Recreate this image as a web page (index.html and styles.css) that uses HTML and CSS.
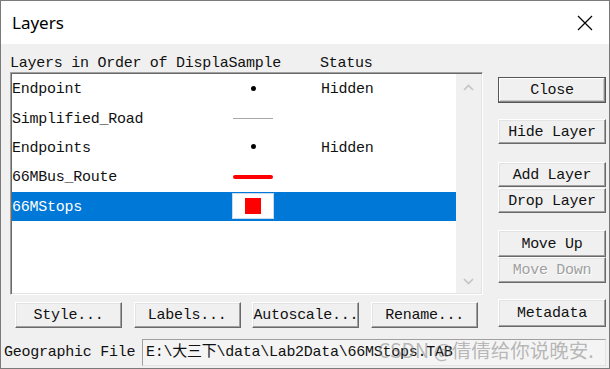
FILE: index.html
```html
<!DOCTYPE html>
<html lang="en">
<head>
    <meta charset="UTF-8">
    <title>Layers</title>
    <link rel="stylesheet" href="styles.css">
</head>
<body>
    <div class="window">
        <!-- Title bar -->
        <div class="titlebar">
            <span class="title">Layers</span>
            <svg class="close-x" width="16" height="16" viewBox="0 0 16 16">
                <path d="M1 1 L15 15 M15 1 L1 15" stroke="#000" stroke-width="1.2" fill="none"/>
            </svg>
        </div>

        <div class="main">
            <!-- Layer list -->
            <div class="left">
                <div class="list-header">
                    <span class="h-name">Layers in Order of Displa</span><span class="h-sample">Sample</span><span>Status</span>
                </div>
                <div class="listbox">
                    <div class="rows">
                        <div class="row">
                            <span class="name">Endpoint</span>
                            <span class="sample"><i class="dot"></i></span>
                            <span class="status">Hidden</span>
                        </div>
                        <div class="row">
                            <span class="name">Simplified_Road</span>
                            <span class="sample"><i class="line-gray"></i></span>
                            <span class="status"></span>
                        </div>
                        <div class="row">
                            <span class="name">Endpoints</span>
                            <span class="sample"><i class="dot"></i></span>
                            <span class="status">Hidden</span>
                        </div>
                        <div class="row">
                            <span class="name">66MBus_Route</span>
                            <span class="sample"><i class="line-red"></i></span>
                            <span class="status"></span>
                        </div>
                        <div class="row selected">
                            <span class="name">66MStops</span>
                            <span class="sample"><span class="swatch"><i class="square"></i></span></span>
                            <span class="status"></span>
                        </div>
                    </div>
                    <div class="scrollbar">
                        <svg width="11" height="7" viewBox="0 0 11 7"><path d="M1 6 L5.5 1.5 L10 6" stroke="#c4c4c4" stroke-width="1.6" fill="none"/></svg>
                        <svg width="11" height="7" viewBox="0 0 11 7"><path d="M1 1 L5.5 5.5 L10 1" stroke="#c4c4c4" stroke-width="1.6" fill="none"/></svg>
                    </div>
                </div>
            </div>

            <!-- Side buttons -->
            <div class="side">
                <button class="btn default btn-close">Close</button>
                <button class="btn btn-hide">Hide Layer</button>
                <button class="btn btn-add">Add Layer</button>
                <button class="btn btn-drop">Drop Layer</button>
                <button class="btn btn-up">Move Up</button>
                <button class="btn btn-down" disabled>Move Down</button>
            </div>

            <!-- Bottom buttons -->
            <div class="bottom-buttons">
                <button class="btn">Style...</button>
                <button class="btn">Labels...</button>
                <button class="btn">Autoscale...</button>
                <button class="btn">Rename...</button>
            </div>
            <div class="side-bottom">
                <button class="btn btn-meta">Metadata</button>
            </div>
        </div>

        <!-- Geographic file -->
        <div class="file-row">
            <span class="file-label">Geographic File</span>
            <div class="file-box">E:\大三下\data\Lab2Data\66MStops.TAB</div>
        </div>

        <div class="watermark">CSDN @倩倩给你说晚安.</div>
    </div>
</body>
</html>
```

FILE: styles.css
```css
body {
    margin: 0;
    padding: 0;
    background-color: #fff;
}

.window {
    position: relative;
    width: 610px;
    height: 369px;
    box-sizing: border-box;
    border: 1px solid #7a7a7a;
    background-color: #f0f0f0;
    font-family: 'Liberation Mono', 'Noto Sans CJK SC', monospace;
    font-size: 15px;
    letter-spacing: -0.26px;
    color: #111;
    overflow: hidden;
}

.titlebar {
    height: 43px;
    background: #fff;
    display: flex;
    align-items: center;
    justify-content: space-between;
    padding: 0 16px 0 11px;
}

.title {
    font-family: 'Noto Sans', sans-serif;
    font-size: 17px;
    letter-spacing: 0;
    color: #000;
}

.main {
    display: grid;
    grid-template-columns: 473px 108px;
    grid-template-rows: 251px 34px;
    column-gap: 15px;
    padding: 0 3px 0 9px;
}

/* list */
.list-header {
    height: 28px;
    box-sizing: border-box;
    padding-top: 11px;
    line-height: 17px;
    display: flex;
    white-space: nowrap;
}

.h-name {
    width: 218.6px;
}

.h-sample {
    width: 91.4px;
}

.listbox {
    height: 223px;
    box-sizing: border-box;
    border-top: 1px solid #a0a0a0;
    border-left: 1px solid #a0a0a0;
    border-right: 1px solid #fff;
    border-bottom: 1px solid #fff;
    box-shadow: inset 1px 1px 0 #696969, inset -1px -1px 0 #e3e3e3;
    padding: 1px;
    display: flex;
}

.rows {
    flex: 1;
    background: #fff;
}

.row {
    height: 29.4px;
    box-sizing: border-box;
    padding-top: 2px;
    display: flex;
    align-items: center;
    white-space: nowrap;
}

.row .name {
    width: 220px;
}

.row .sample {
    width: 42px;
    display: flex;
    justify-content: center;
    align-items: center;
}

.row .status {
    margin-left: 47px;
}

.row.selected {
    background: #0078d7;
    color: #fff;
}

.dot {
    width: 5px;
    height: 5px;
    border-radius: 50%;
    background: #000;
    margin-top: -3px;
}

.line-gray {
    width: 40px;
    height: 1px;
    background: #a8a8a8;
    margin-top: -2px;
}

.line-red {
    width: 40px;
    height: 4px;
    border-radius: 2px;
    background: #ff0000;
    margin-top: -2px;
}

.swatch {
    width: 40px;
    height: 24px;
    margin-top: -2px;
    background: #fff;
    border: 1px solid #c8dcf0;
    display: flex;
    justify-content: center;
    align-items: center;
}

.square {
    width: 16px;
    height: 16px;
    background: #ff0000;
}

.scrollbar {
    width: 25px;
    background: #f0f0f0;
    display: flex;
    flex-direction: column;
    justify-content: space-between;
    align-items: center;
    padding: 10px 0 8px;
}

/* buttons */
.btn {
    display: block;
    box-sizing: border-box;
    width: 108px;
    height: 25px;
    padding: 1px 0 0;
    font-family: inherit;
    font-size: 15px;
    letter-spacing: -0.26px;
    color: #111;
    background: #f0f0f0;
    border-top: 1px solid #fff;
    border-left: 1px solid #fff;
    border-right: 1px solid #696969;
    border-bottom: 1px solid #696969;
    box-shadow: inset -1px -1px 0 #a0a0a0, inset 1px 1px 0 #e3e3e3;
}

.btn.default {
    border: 1px solid #555;
    box-shadow: inset -1px -1px 0 #8a8a8a, inset 1px 1px 0 #fff, inset -2px -2px 0 #c8c8c8;
}

.btn-close { margin-top: 33px; height: 26px; }
.btn-hide { margin-top: 16px; }
.btn-add { margin-top: 18px; }
.btn-drop { margin-top: 1px; }
.btn-up { margin-top: 17px; height: 27px; }
.btn-down { height: 26px; }

.btn:disabled {
    color: #a0a0a0;
    text-shadow: 1px 1px 0 #fff;
}

.bottom-buttons {
    display: grid;
    grid-template-columns: repeat(4, 107px);
    column-gap: 11.7px;
    padding: 7px 0 0 5px;
}

.bottom-buttons .btn {
    width: 107px;
    height: 26px;
}

.side-bottom {
    padding-top: 4px;
}

.btn-meta {
    height: 28px;
}

/* file row */
.file-row {
    display: flex;
    align-items: center;
    padding: 10px 3px 0 3px;
}

.file-label {
    width: 138px;
    white-space: nowrap;
}

.file-box {
    flex: 1;
    height: 27px;
    box-sizing: border-box;
    border-top: 1px solid #a0a0a0;
    border-left: 1px solid #a0a0a0;
    border-right: 1px solid #e3e3e3;
    border-bottom: 1px solid #e3e3e3;
    background: #f4f4f4;
    padding: 1px 0 0 3px;
    line-height: 24px;
    white-space: nowrap;
    overflow: hidden;
}

.watermark {
    position: absolute;
    left: 377px;
    top: 334px;
    font-family: 'Noto Sans CJK SC', sans-serif;
    font-size: 19.5px;
    letter-spacing: 0;
    color: rgba(130, 130, 130, 0.55);
    white-space: nowrap;
    pointer-events: none;
}
```
